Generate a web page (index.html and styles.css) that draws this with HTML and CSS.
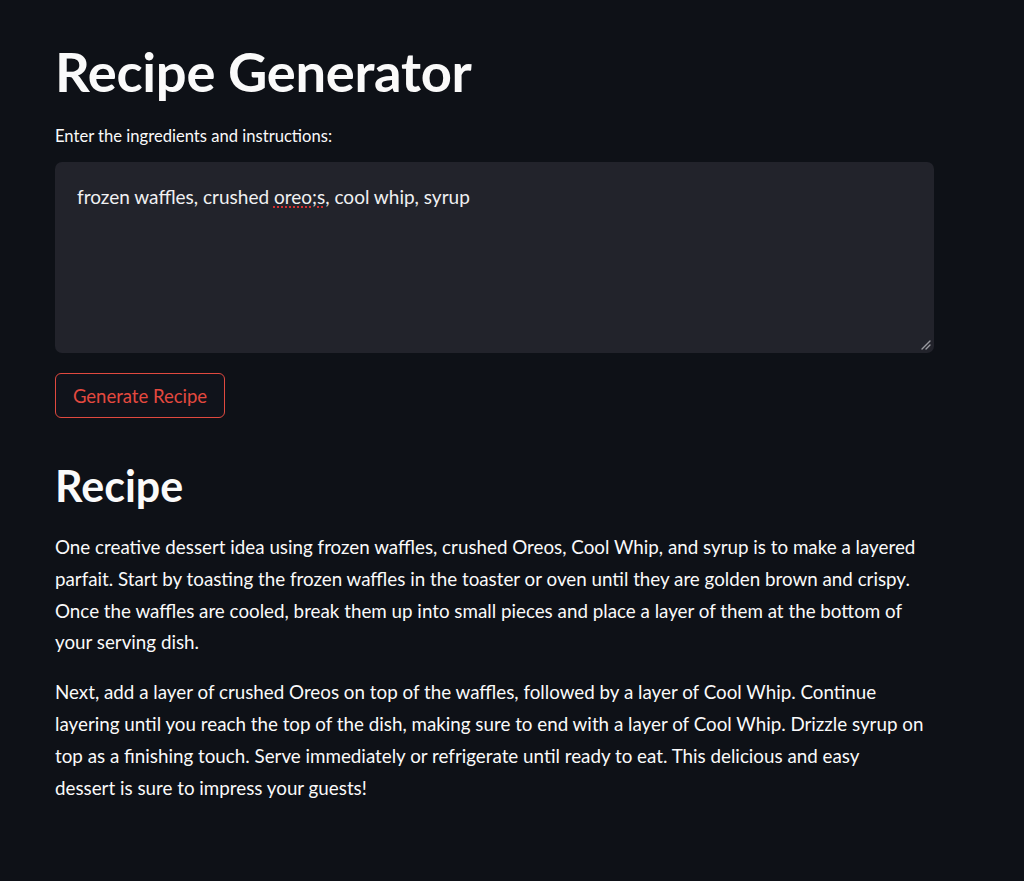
FILE: index.html
```html
<!DOCTYPE html>
<html lang="en">
<head>
<meta charset="utf-8">
<title>Recipe Generator</title>
<link rel="stylesheet" href="styles.css">
</head>
<body>
<main class="block">
  <h1 class="title">Recipe Generator</h1>
  <label class="label" for="ing">Enter the ingredients and instructions:</label>
  <div class="area">
    <div class="area-text" id="ing">frozen waffles, crushed <span class="misspelt">oreo;s</span>, cool whip, syrup</div>
    <svg class="grip" width="12" height="12" viewBox="0 0 12 12"><path d="M11 3 L3 11 M11 7 L7 11" stroke="#9a9aa0" stroke-width="1.4" stroke-linecap="round"/></svg>
  </div>
  <button class="btn">Generate Recipe</button>
  <h2 class="subtitle">Recipe</h2>
  <p class="para">One creative dessert idea using frozen waffles, crushed Oreos, Cool Whip, and syrup is to make a layered<br>parfait. Start by toasting the frozen waffles in the toaster or oven until they are golden brown and crispy.<br>Once the waffles are cooled, break them up into small pieces and place a layer of them at the bottom of<br>your serving dish.</p>
  <p class="para">Next, add a layer of crushed Oreos on top of the waffles, followed by a layer of Cool Whip. Continue<br>layering until you reach the top of the dish, making sure to end with a layer of Cool Whip. Drizzle syrup on<br>top as a finishing touch. Serve immediately or refrigerate until ready to eat. This delicious and easy<br>dessert is sure to impress your guests!</p>
</main>
</body>
</html>
```

FILE: styles.css
```css
html, body {
  margin: 0;
  padding: 0;
  background: #0e1117;
}
body {
  font-family: "Lato", "Noto Sans", sans-serif;
  color: #fafafa;
  width: 1024px;
  height: 881px;
  overflow: hidden;
}
.block {
  width: 879px;
  padding: 40px 0 0 55px;
  display: flex;
  flex-direction: column;
  align-items: flex-start;
}
.title {
  margin: 0;
  font-size: 54.3px;
  font-weight: 700;
  line-height: 62px;
  letter-spacing: -0.3px;
}
.label {
  margin-top: 23px;
  font-size: 16.6px;
  line-height: 22px;
}
.area {
  margin-top: 15px;
  position: relative;
  width: 879px;
  height: 191px;
  box-sizing: border-box;
  background: #22232b;
  border-radius: 7px;
  padding: 22px 22px;
}
.area-text {
  font-size: 19px;
  line-height: 26px;
  color: #f0f0f2;
}
.misspelt {
  text-decoration: underline dotted #d33;
  text-underline-offset: 3px;
}
.grip {
  position: absolute;
  right: 3px;
  bottom: 3px;
}
.btn {
  margin-top: 20px;
  height: 45px;
  width: 170px;
  background: #10131b;
  border: 1.7px solid #e0493f;
  border-radius: 6px;
  color: #e4493f;
  font-family: inherit;
  font-size: 18.5px;
  padding: 0;
}
.subtitle {
  margin: 42px 0 0;
  font-size: 43px;
  font-weight: 700;
  line-height: 52px;
}
.para {
  margin: 19px 0 0;
  font-size: 18.8px;
  line-height: 31.8px;
  width: 900px;
  white-space: nowrap;
}
.para + .para {
  margin-top: 18px;
}
```
